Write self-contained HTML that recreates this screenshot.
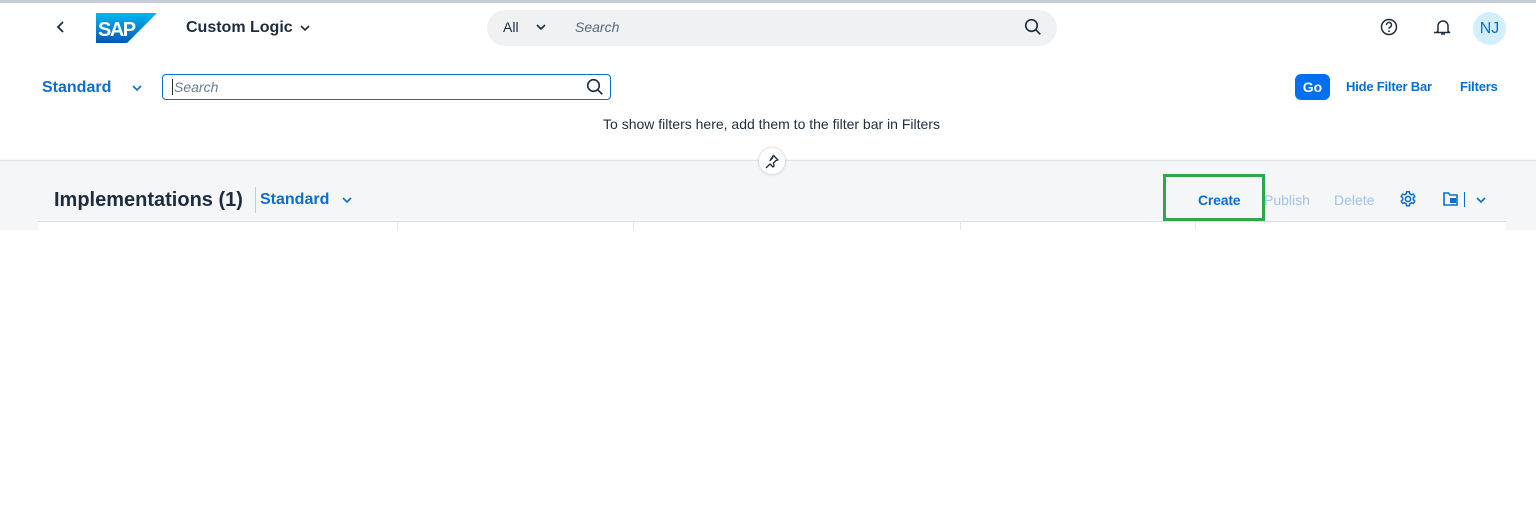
<!DOCTYPE html>
<html><head><meta charset="utf-8"><style>
*{box-sizing:border-box;margin:0;padding:0}
body{width:1536px;height:529px;background:#fff;font-family:"Liberation Sans",Arial,sans-serif;position:relative;overflow:hidden;color:#1d2d3e}
.a{position:absolute}
.blue{color:#0a6ed1}
svg{display:block}
</style></head><body>
<div class="a" style="left:0;top:0;width:1536px;height:3px;background:#c5ccd6"></div>
<svg class="a" style="left:54px;top:20px" width="14" height="14" viewBox="0 0 14 14"><path d="M9 2L4 7l5 5" stroke="#1d2d3e" stroke-width="1.8" fill="none"/></svg>
<svg class="a" style="left:96px;top:13px" width="61" height="30" viewBox="0 0 61 30"><defs><linearGradient id="g" x1="0" y1="0" x2="0" y2="1"><stop offset="0" stop-color="#00b8f1"/><stop offset="1" stop-color="#0057b8"/></linearGradient></defs><path d="M0 0H61L31 30H0Z" fill="url(#g)"/><text x="2" y="23" font-family="Liberation Sans" font-weight="bold" font-size="20" fill="#fff" letter-spacing="-1.5">SAP</text></svg>
<div class="a" style="left:186px;top:19px;font-size:16px;font-weight:bold;color:#1d2d3e">Custom Logic</div>
<svg class="a" style="left:299px;top:23px" width="12" height="10" viewBox="0 0 12 10"><path d="M2 3l4 4 4-4" stroke="#1d2d3e" stroke-width="1.6" fill="none"/></svg>
<div class="a" style="left:487px;top:10px;width:570px;height:36px;border-radius:18px;background:#eff1f2"></div>
<div class="a" style="left:503px;top:19px;font-size:14px;color:#1d2d3e">All</div>
<svg class="a" style="left:535px;top:22px" width="12" height="10" viewBox="0 0 12 10"><path d="M2 3l4 4 4-4" stroke="#1d2d3e" stroke-width="1.6" fill="none"/></svg>
<div class="a" style="left:575px;top:19px;font-size:14px;font-style:italic;color:#556b82">Search</div>
<svg class="a" style="left:1024px;top:18px" width="18" height="18" viewBox="0 0 18 18"><circle cx="7.5" cy="7.5" r="5.8" stroke="#1d2d3e" stroke-width="1.6" fill="none"/><path d="M11.8 11.8l4.5 4.5" stroke="#1d2d3e" stroke-width="1.6"/></svg>
<svg class="a" style="left:1380px;top:18px" width="18" height="18" viewBox="0 0 18 18"><circle cx="9" cy="9" r="7.5" stroke="#1d2d3e" stroke-width="1.5" fill="none"/><path d="M6.5 7a2.5 2.5 0 1 1 3.5 2.2c-.7.4-1 .8-1 1.6" stroke="#1d2d3e" stroke-width="1.5" fill="none"/><circle cx="9" cy="13.2" r=".9" fill="#1d2d3e"/></svg>
<svg class="a" style="left:1434px;top:18px" width="18" height="18" viewBox="0 0 18 18"><path d="M4 13V8a5 5 0 0 1 10 0v5l1.5 1.5h-15L2.5 14.5z" stroke="#1d2d3e" stroke-width="1.5" fill="none" stroke-linejoin="round"/><path d="M7 16h4" stroke="#1d2d3e" stroke-width="1.5"/></svg>
<div class="a" style="left:1473px;top:12px;width:33px;height:33px;border-radius:50%;background:#d1efff;color:#0a6ed1;font-size:16px;text-align:center;line-height:33px">NJ</div>
<div class="a blue" style="left:42px;top:79px;font-size:16px;font-weight:bold">Standard</div>
<svg class="a" style="left:131px;top:83px" width="12" height="10" viewBox="0 0 12 10"><path d="M2 3l4 4 4-4" stroke="#0a6ed1" stroke-width="1.6" fill="none"/></svg>
<div class="a" style="left:162px;top:74px;width:449px;height:26px;border:1.5px solid #0a6ed1;border-radius:4px;background:#fff"></div>
<div class="a" style="left:172px;top:79px;width:1px;height:16px;background:#1d2d3e"></div>
<div class="a" style="left:174px;top:79px;font-size:14px;font-style:italic;color:#6a7d90">Search</div>
<svg class="a" style="left:586px;top:78px" width="18" height="18" viewBox="0 0 18 18"><circle cx="7.5" cy="7.5" r="5.8" stroke="#1d2d3e" stroke-width="1.6" fill="none"/><path d="M11.8 11.8l4.5 4.5" stroke="#1d2d3e" stroke-width="1.6"/></svg>
<div class="a" style="left:1295px;top:74px;width:35px;height:26px;border-radius:6px;background:#0070f2;color:#fff;font-weight:bold;font-size:14px;text-align:center;line-height:26px">Go</div>
<div class="a blue" style="left:1346px;top:79px;font-size:13px;font-weight:bold;letter-spacing:-0.2px">Hide Filter Bar</div>
<div class="a blue" style="left:1460px;top:79px;font-size:13px;font-weight:bold;letter-spacing:-0.2px">Filters</div>
<div class="a" style="left:0;top:116px;width:1536px;text-align:center;font-size:14px;color:#1d2d3e;padding-left:7px">To show filters here, add them to the filter bar in Filters</div>
<div class="a" style="left:0;top:160px;width:1536px;height:70px;background:#f5f6f7;border-top:1px solid #e1e4e8;box-shadow:0 -1px 2px rgba(0,0,0,.05)"></div>
<div class="a" style="left:759px;top:148px;width:26px;height:26px;border-radius:50%;background:#fff;box-shadow:0 0 3px rgba(0,0,0,.25)"></div>
<svg class="a" style="left:764px;top:153px" width="16" height="16" viewBox="0 0 16 16"><path d="M9 2l5 5-2 .5-2.5 2.5.5 3-1 1-3-3-4 4M6 7.5l2.5-2.5.5-2z" stroke="#1d2d3e" stroke-width="1.3" fill="none" stroke-linejoin="round"/></svg>
<div class="a" style="left:54px;top:189px;font-size:20px;font-weight:bold;color:#1d2d3e">Implementations (1)</div>
<div class="a" style="left:255px;top:187px;width:1px;height:26px;background:#c5ccd6"></div>
<div class="a blue" style="left:260px;top:191px;font-size:16px;font-weight:bold">Standard</div>
<svg class="a" style="left:341px;top:195px" width="12" height="10" viewBox="0 0 12 10"><path d="M2 3l4 4 4-4" stroke="#0a6ed1" stroke-width="1.6" fill="none"/></svg>
<div class="a" style="left:1198px;top:192px;font-size:14px;font-weight:bold;color:#0a6ed1;letter-spacing:-0.2px">Create</div>
<div class="a" style="left:1163px;top:174px;width:102px;height:47px;border:3px solid #2ea84a"></div>
<div class="a" style="left:1264px;top:192px;font-size:14px;color:#9cc3eb">Publish</div>
<div class="a" style="left:1334px;top:192px;font-size:14px;color:#9cc3eb">Delete</div>
<svg class="a" style="left:1399px;top:190px" width="18" height="18" viewBox="0 0 18 18"><circle cx="9" cy="9" r="2.6" stroke="#0a6ed1" stroke-width="1.6" fill="none"/><path d="M7.6 1.8h2.8l.4 2 1.7 1 1.9-.7 1.4 2.4-1.5 1.3v2l1.5 1.3-1.4 2.4-1.9-.7-1.7 1-.4 2H7.6l-.4-2-1.7-1-1.9.7-1.4-2.4 1.5-1.3v-2L2.2 6.5l1.4-2.4 1.9.7 1.7-1z" stroke="#0a6ed1" stroke-width="1.5" fill="none" stroke-linejoin="round"/></svg>
<svg class="a" style="left:1441px;top:190px" width="20" height="18" viewBox="0 0 20 18"><path d="M3 5V15h13V5H9L7.5 3H3z" stroke="#0a6ed1" stroke-width="1.6" fill="none"/><rect x="9" y="8" width="6" height="5" fill="#0a6ed1"/></svg>
<div class="a" style="left:1464px;top:192px;width:1px;height:15px;background:#0a6ed1"></div>
<svg class="a" style="left:1475px;top:195px" width="12" height="10" viewBox="0 0 12 10"><path d="M2 3l4 4 4-4" stroke="#0a6ed1" stroke-width="1.6" fill="none"/></svg>
<div class="a" style="left:38px;top:221px;width:1468px;height:9px;background:#fff;border-top:1px solid #d9dde2"></div>
<div class="a" style="left:397px;top:222px;width:1px;height:8px;background:#e5e5e5"></div>
<div class="a" style="left:633px;top:222px;width:1px;height:8px;background:#e5e5e5"></div>
<div class="a" style="left:960px;top:222px;width:1px;height:8px;background:#e5e5e5"></div>
<div class="a" style="left:1195px;top:222px;width:1px;height:8px;background:#e5e5e5"></div>
</body></html>
